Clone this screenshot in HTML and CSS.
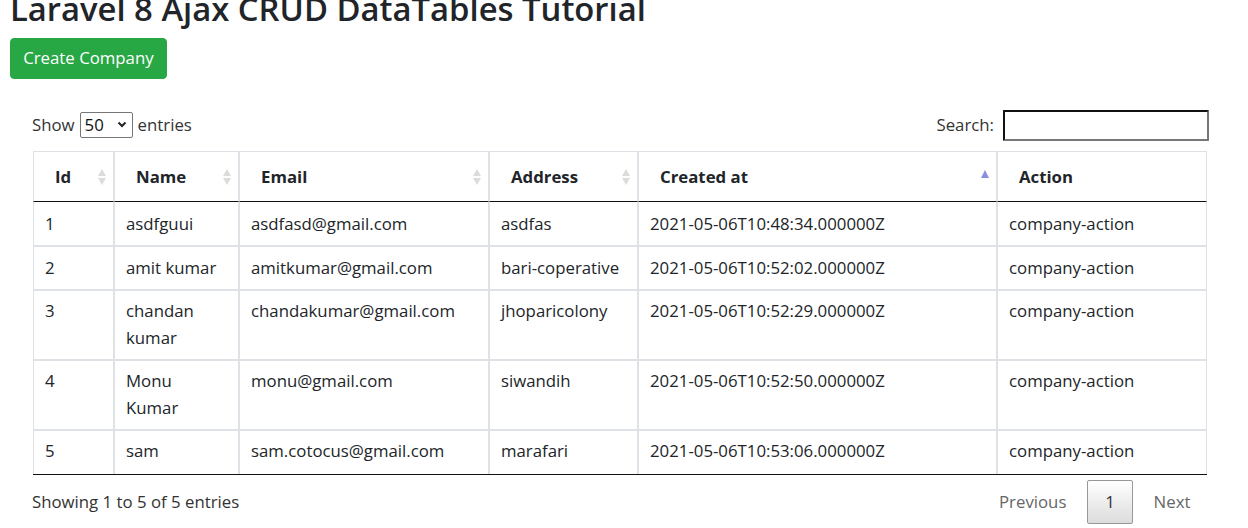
FILE: index.html
```html
<!DOCTYPE html>
<html lang="en">
<head>
<meta charset="utf-8">
<title>Laravel 8 Ajax CRUD DataTables Tutorial</title>
<link rel="stylesheet" href="styles.css">
</head>
<body>
<div class="page">
  <h2 class="title">Laravel 8 Ajax CRUD DataTables Tutorial</h2>
  <a class="btn-success">Create Company</a>

  <div class="dt-wrap">
    <div class="dt-controls">
      <label class="dt-length">Show
        <span class="select-box">
          <select class="dt-select"><option>50</option></select>
          <svg class="chev" width="10" height="7" viewBox="0 0 10 7"><polyline points="1.5,1.5 5,5 8.5,1.5" fill="none" stroke="#222" stroke-width="2"/></svg>
        </span>
        entries</label>
      <label class="dt-search">Search: <input class="search-input" type="text"></label>
    </div>

    <table class="dt-table">
      <thead>
        <tr>
          <th class="c-id sorting">Id</th>
          <th class="c-name sorting">Name</th>
          <th class="c-email sorting">Email</th>
          <th class="c-addr sorting">Address</th>
          <th class="c-created sorting-asc">Created at</th>
          <th class="c-action">Action</th>
        </tr>
      </thead>
      <tbody>
        <tr><td>1</td><td>asdfguui</td><td>asdfasd@gmail.com</td><td>asdfas</td><td>2021-05-06T10:48:34.000000Z</td><td>company-action</td></tr>
        <tr><td>2</td><td>amit kumar</td><td>amitkumar@gmail.com</td><td>bari-coperative</td><td>2021-05-06T10:52:02.000000Z</td><td>company-action</td></tr>
        <tr><td>3</td><td>chandan kumar</td><td>chandakumar@gmail.com</td><td>jhoparicolony</td><td>2021-05-06T10:52:29.000000Z</td><td>company-action</td></tr>
        <tr><td>4</td><td>Monu Kumar</td><td>monu@gmail.com</td><td>siwandih</td><td>2021-05-06T10:52:50.000000Z</td><td>company-action</td></tr>
        <tr><td>5</td><td>sam</td><td>sam.cotocus@gmail.com</td><td>marafari</td><td>2021-05-06T10:53:06.000000Z</td><td>company-action</td></tr>
      </tbody>
    </table>

    <div class="dt-footer">
      <div class="dt-info">Showing 1 to 5 of 5 entries</div>
      <div class="dt-paginate">
        <a class="pg-btn disabled">Previous</a>
        <a class="pg-btn current">1</a>
        <a class="pg-btn disabled">Next</a>
      </div>
    </div>
  </div>
</div>
</body>
</html>
```

FILE: styles.css
```css
* { box-sizing: border-box; }

html, body {
  margin: 0;
  background: #fff;
}

body {
  font-family: "Open Sans", "Noto Sans", sans-serif;
  font-size: 16.8px;
  line-height: 26.4px;
  color: #212529;
}

.page {
  padding: 0 10px;
}

.title {
  margin: -11px 0 9px 0;
  font-size: 32.8px;
  line-height: 40px;
  font-weight: 600;
  color: #212529;
  white-space: nowrap;
}

.btn-success {
  display: inline-block;
  height: 41px;
  padding: 6.3px 12.2px;
  border: 1px solid #28a745;
  border-radius: 4px;
  background: #28a745;
  color: #fff;
  font-size: 16.8px;
  line-height: 26.4px;
}

.dt-wrap {
  margin: 0 29px 0 22px;
}

.dt-controls {
  margin-top: 31px;
  display: flex;
  justify-content: space-between;
  align-items: flex-start;
  color: #333;
}

.dt-length {
  display: flex;
  align-items: center;
  gap: 5px;
  height: 28px;
  margin-top: 1px;
}

.select-box {
  position: relative;
  display: inline-block;
  width: 53px;
  height: 26px;
}

.dt-select {
  appearance: none;
  -webkit-appearance: none;
  width: 53px;
  height: 26px;
  border: 1px solid #767676;
  border-radius: 2px;
  background: #fff;
  padding: 0 0 0 4px;
  font-family: "Open Sans", sans-serif;
  font-size: 16.8px;
  line-height: 24px;
  color: #111;
}

.chev {
  position: absolute;
  right: 6px;
  top: 9px;
}

.dt-search {
  display: flex;
  align-items: center;
  gap: 9px;
  height: 31px;
}

.search-input {
  width: 206px;
  height: 31px;
  margin: 0;
  border-style: solid;
  border-width: 2px;
  border-color: #111 #777 #777 #111;
  border-radius: 1px;
  padding: 4px;
  background: #fff;
}

.dt-table {
  width: calc(100% - 3px);
  margin: 10px 0 0 1px;
  table-layout: fixed;
  border-collapse: separate;
  border-spacing: 0;
  border-bottom: 1px solid #111;
}

.dt-table th,
.dt-table td {
  border: 1px solid #dee2e6;
  text-align: left;
  vertical-align: top;
}

.dt-table th {
  position: relative;
  padding: 11.5px 30px 11.5px 21px;
  font-weight: 700;
  border-bottom: 1px solid #111;
  color: #212529;
}

.dt-table td {
  padding: 7.6px 11px;
}

.dt-table tbody tr:first-child td {
  border-top: 0;
  padding-top: 8.6px;
}

.dt-table tbody tr:last-child td {
  border-bottom: 0;
  padding-bottom: 9px;
}

.c-id { width: 81px; }
.c-name { width: 125px; }
.c-email { width: 250px; }
.c-addr { width: 149px; }
.c-created { width: 359px; }

.sorting::before,
.sorting::after,
.sorting-asc::after {
  content: "";
  position: absolute;
  right: 7px;
  width: 0;
  height: 0;
  border-left: 4.5px solid transparent;
  border-right: 4.5px solid transparent;
}

.sorting::before {
  top: 17px;
  border-bottom: 7px solid #dcdcdc;
}

.sorting::after {
  top: 26px;
  border-top: 7px solid #dcdcdc;
}

.sorting-asc::after {
  top: 18px;
  right: 7px;
  border-bottom: 8px solid #8c8ddf;
}

.dt-footer {
  display: flex;
  justify-content: space-between;
  align-items: flex-start;
}

.dt-info {
  padding-top: 14px;
  color: #333;
}

.dt-paginate {
  display: flex;
  padding-top: 5px;
}

.pg-btn {
  display: inline-block;
  margin-left: 2px;
  padding: 8px 17.6px;
  border: 1px solid transparent;
  border-radius: 2px;
  color: #666;
  line-height: 26.4px;
}

.pg-btn.current {
  padding: 8px 17.2px;
  height: 44px;
  color: #333;
  border: 1px solid #979797;
  background: linear-gradient(to bottom, #ffffff 0%, #dcdcdc 100%);
}
```
